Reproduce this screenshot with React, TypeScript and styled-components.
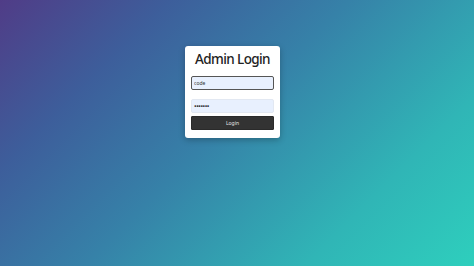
import React from "react";
import styled, { createGlobalStyle } from "styled-components";

const Global = createGlobalStyle`
  html, body { margin: 0; padding: 0; }
  body { font-family: "Noto Sans", "Open Sans", sans-serif; }
  * { box-sizing: border-box; }
`;

const Page = styled.div`
  width: 100vw;
  height: 100vh;
  display: flex;
  justify-content: center;
  align-items: flex-start;
  padding: 46px 9px 0 0;
  background: linear-gradient(135deg, #503c87 0%, #3d5e9b 23%, #3681a8 47%, #30b5b6 77%, #2ecfbd 100%);
`;

const Card = styled.form`
  width: 95px;
  height: 92px;
  background: #ffffff;
  border-radius: 3px;
  box-shadow: 0 2px 6px rgba(0, 0, 0, 0.25);
  padding: 4px 6px 8px;
  display: flex;
  flex-direction: column;
  align-items: stretch;
`;

const Title = styled.h1`
  margin: 0 0 8px;
  height: 18px;
  font-size: 13.5px;
  line-height: 18px;
  font-weight: 500;
  color: #222;
  text-align: center;
  white-space: nowrap;
  letter-spacing: -0.6px;
`;

const Field = styled.input<{ $focused?: boolean }>`
  height: 14px;
  width: 100%;
  margin: 0;
  padding: 0 2px;
  border-radius: 2px;
  background: #e8f0fe;
  border: 1px solid ${(p) => (p.$focused ? "#555" : "#e2e8f2")};
  font-family: "Noto Sans", sans-serif;
  font-size: ${(p) => (p.type === "password" ? "7px" : "5px")};
  color: #333;
  outline: none;
  letter-spacing: ${(p) => (p.type === "password" ? "-0.5px" : "0")};
`;

const Spacer = styled.div<{ $h: number }>`
  height: ${(p) => p.$h}px;
`;

const Button = styled.button`
  height: 14px;
  width: 100%;
  margin: 0;
  padding: 0;
  border: 1px solid #2a2a2a;
  border-radius: 1px;
  background: #333333;
  color: #e8e8e8;
  font-family: "Noto Sans", sans-serif;
  font-size: 5px;
`;

export default function App() {
  return (
    <>
      <Global />
      <Page>
        <Card onSubmit={(e) => e.preventDefault()}>
          <Title>Admin Login</Title>
          <Field $focused defaultValue="code" />
          <Spacer $h={9} />
          <Field type="password" defaultValue="1234567" />
          <Spacer $h={3} />
          <Button type="submit">Login</Button>
        </Card>
      </Page>
    </>
  );
}
